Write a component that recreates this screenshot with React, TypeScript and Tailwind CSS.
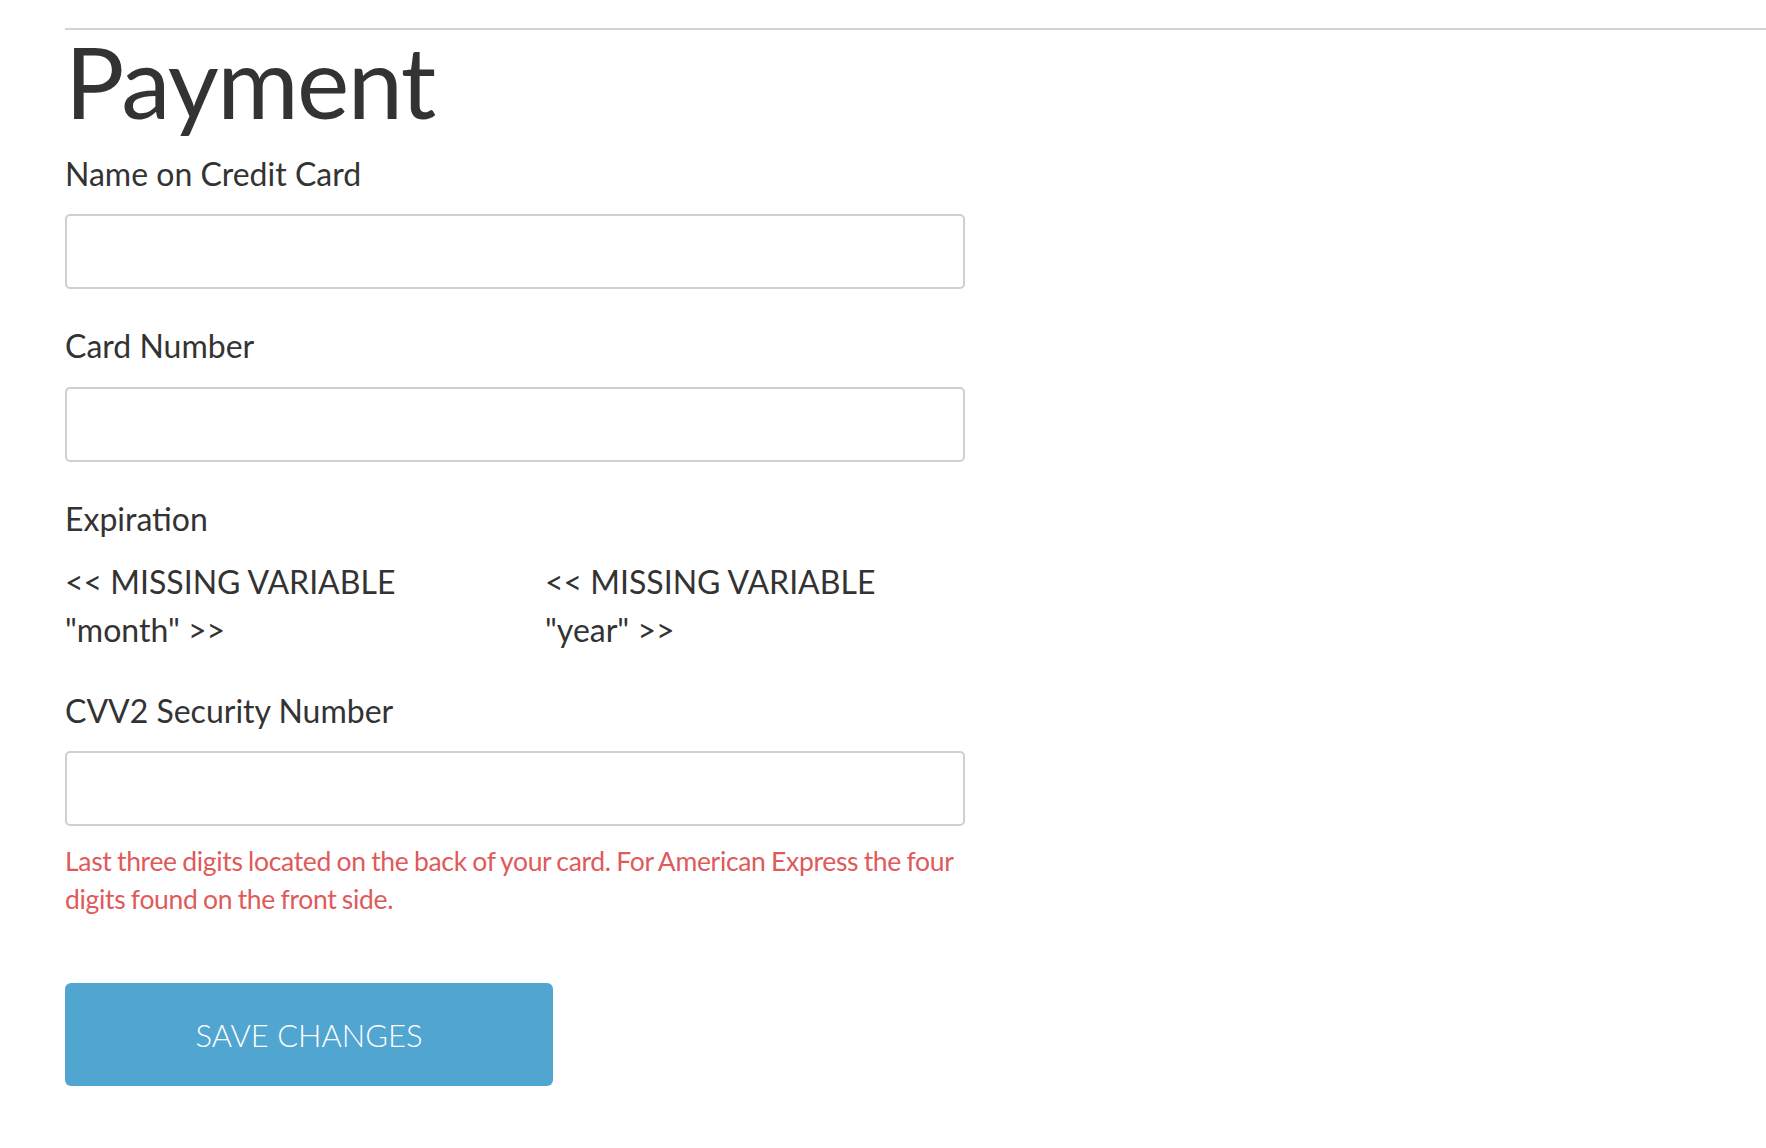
export default function App() {
  return (
    <div className="min-h-screen bg-white pl-[65px] pt-[28px] text-[#333] font-['Lato','Liberation_Sans',sans-serif]">
      <hr className="border-0 border-t-2 border-[#d3d3d3]" />

      <h1 className="mt-[1px] text-[99px] leading-[99px] font-normal tracking-[-0.016em]">Payment</h1>

      <form className="mt-[20px] w-[900px]">
        <div className="mb-[33px]">
          <label className="mb-[16px] block text-[32px] leading-[48px]">Name on Credit Card</label>
          <input
            type="text"
            className="block h-[75px] w-full rounded-[5px] border-2 border-[#cfcfcf] bg-white px-4 text-[32px]"
          />
        </div>

        <div className="mb-[33px]">
          <label className="mb-[17px] block text-[32px] leading-[48px]">Card Number</label>
          <input
            type="text"
            className="block h-[75px] w-full rounded-[5px] border-2 border-[#cfcfcf] bg-white px-4 text-[32px]"
          />
        </div>

        <div className="mb-[33px]">
          <label className="mb-[15px] block text-[32px] leading-[48px]">Expiration</label>
          <div className="-mx-[30px] grid grid-cols-2">
            <div className="px-[30px] text-[32px] leading-[48px]">&lt;&lt; MISSING VARIABLE "month" &gt;&gt;</div>
            <div className="px-[30px] text-[32px] leading-[48px]">&lt;&lt; MISSING VARIABLE "year" &gt;&gt;</div>
          </div>
        </div>

        <div>
          <label className="mb-[16px] block text-[32px] leading-[48px]">CVV2 Security Number</label>
          <input
            type="text"
            className="block h-[75px] w-full rounded-[5px] border-2 border-[#cfcfcf] bg-white px-4 text-[32px]"
          />
          <p className="mt-[17px] text-[26.5px] leading-[37.7px] tracking-[-0.012em] [word-spacing:-1px] text-[#df5a5a]">
            Last three digits located on the back of your card. For American Express the four digits found on the
            front side.
          </p>
        </div>

        <button
          type="button"
          className="mt-[65px] h-[103px] w-[488px] rounded-[6px] bg-[#50a5d1] text-[31px] font-light uppercase text-white"
        >
          Save Changes
        </button>
      </form>
    </div>
  );
}
